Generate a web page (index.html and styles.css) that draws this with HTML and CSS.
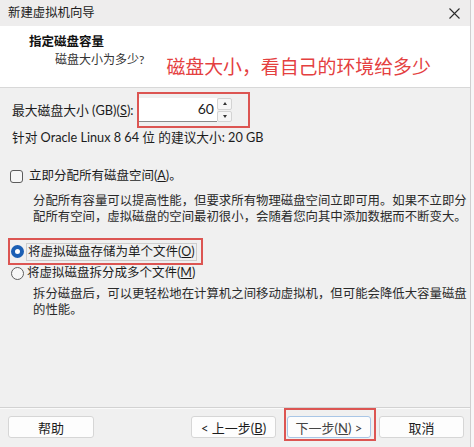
FILE: index.html
```html
<!DOCTYPE html>
<html lang="zh-CN">
  <head>
    <meta charset="UTF-8" />
    <meta name="viewport" content="width=device-width, initial-scale=1.0" />
    <title>新建虚拟机向导</title>
    <link rel="stylesheet" href="styles.css">
  </head>
  <body>
    <div class="window">
      <div class="titlebar">
        <span class="title">新建虚拟机向导</span>
        <svg class="close" width="11" height="11" viewBox="0 0 11 11">
          <path d="M0.5 0.5 L10.5 10.5 M10.5 0.5 L0.5 10.5" stroke="#2b2b2b" stroke-width="1.1" fill="none" />
        </svg>
      </div>

      <div class="header">
        <div class="heading">指定磁盘容量</div>
        <div class="sub-row">
          <span class="sub">磁盘大小为多少?</span>
          <span class="note">磁盘大小，看自己的环境给多少</span>
        </div>
      </div>

      <div class="content">
        <div class="size-row">
          <span class="size-label">最大磁盘大小 (GB)(<u>S</u>):</span>
          <div class="mark mark-spin">
            <div class="spin">
              <div class="spin-value">60</div>
              <div class="spin-arrows">
                <span class="spin-btn"><i class="tri tri-up"></i></span>
                <span class="spin-btn"><i class="tri tri-down"></i></span>
              </div>
            </div>
          </div>
        </div>
        <div class="hint">针对 Oracle Linux 8 64 位 的建议大小: 20 GB</div>

        <div class="check-row">
          <span class="checkbox"></span>
          <span>立即分配所有磁盘空间(<u>A</u>)。</span>
        </div>
        <p class="desc">分配所有容量可以提高性能，但要求所有物理磁盘空间立即可用。如果不立即分<br>配所有空间，虚拟磁盘的空间最初很小，会随着您向其中添加数据而不断变大。</p>

        <div class="mark mark-radio">
          <span class="radio radio-on"></span>
          <span class="focus-label">将虚拟磁盘存储为单个文件(<u>O</u>)</span>
        </div>
        <div class="radio-row">
          <span class="radio"></span>
          <span>将虚拟磁盘拆分成多个文件(<u>M</u>)</span>
        </div>
        <p class="desc desc-split">拆分磁盘后，可以更轻松地在计算机之间移动虚拟机，但可能会降低大容量磁盘<br>的性能。</p>
      </div>

      <div class="footer">
        <button class="btn">帮助</button>
        <button class="btn btn-back">&lt; 上一步(<u>B</u>)</button>
        <div class="mark mark-next">
          <button class="btn btn-default">下一步(<u>N</u>) &gt;</button>
        </div>
        <button class="btn btn-cancel">取消</button>
      </div>
    </div>
  </body>
</html>
```

FILE: styles.css
```css
* {
  box-sizing: border-box;
}

body {
  margin: 0;
  background: #f7f7f7;
  font-family: Lato, "Noto Sans CJK SC", sans-serif;
  font-size: 12.5px;
  line-height: 16px;
  color: #1c1c1c;
}

.window {
  width: 471px;
  height: 447px;
  display: flex;
  flex-direction: column;
  background: #f0f0f0;
  border-right: 1px solid #cfcfcf;
}

.titlebar {
  height: 26px;
  display: flex;
  align-items: center;
  justify-content: space-between;
  padding: 0 10px 0 8px;
  background: #eeeded;
}

.titlebar .title {
  font-size: 12.4px;
  color: #202020;
}

.header {
  height: 62px;
  padding-top: 8px;
  background: #fff;
  border-bottom: 1px solid #d8d8d8;
}

.heading {
  padding-left: 29px;
  font-size: 12.5px;
  font-weight: bold;
  color: #111;
}

.sub-row {
  display: flex;
  align-items: flex-start;
  margin-top: 2px;
  padding-left: 55px;
  white-space: nowrap;
}

.sub {
  font-size: 12px;
  color: #333;
}

.note {
  margin: 3px 0 0 22px;
  font-size: 18.9px;
  line-height: 24px;
  color: #e4403f;
}

.content {
  height: 319px;
  padding-left: 8px;
  white-space: nowrap;
}

.mark {
  border: 2px solid #dc5552;
}

.size-row {
  display: flex;
  align-items: center;
  margin: 4px 0 0 4px;
}

.size-label {
  width: 125px;
  flex-shrink: 0;
  font-size: 12.8px;
}

.mark-spin {
  width: 113px;
  height: 36px;
  padding: 4px 16px 0 0;
}

.spin {
  display: flex;
  height: 24px;
}

.spin-value {
  width: 78px;
  padding: 3px 3px 0 0;
  text-align: right;
  font-size: 14px;
  background: #fff;
  border-bottom: 1px solid #8a8a8a;
}

.spin-arrows {
  display: flex;
  flex-direction: column;
  gap: 1px;
  width: 15px;
}

.spin-btn {
  flex: 1;
  display: flex;
  align-items: center;
  justify-content: center;
  background: #f6f6f6;
  border: 1px solid #d3d3d3;
  border-radius: 2px;
}

.tri {
  width: 0;
  height: 0;
  border-left: 2.5px solid transparent;
  border-right: 2.5px solid transparent;
}

.tri-up {
  border-bottom: 3px solid #333;
}

.tri-down {
  border-top: 3px solid #333;
}

.hint {
  margin: 1px 0 0 4px;
  font-size: 12.7px;
}

.check-row,
.radio-row {
  display: flex;
  align-items: center;
  gap: 6px;
}

.check-row {
  margin: 23px 0 0 2px;
}

.checkbox {
  width: 13px;
  height: 13px;
  border: 1px solid #5c5c5c;
  border-radius: 3px;
  background: #f7f7f7;
}

.desc {
  margin: 9px 0 0 25px;
  font-size: 12.4px;
  color: #2a2a2a;
}

.desc-split {
  margin-top: 5px;
}

.mark-radio {
  display: flex;
  align-items: center;
  gap: 2px;
  width: 195px;
  height: 27px;
  margin-top: 13px;
  padding-left: 1px;
}

.radio {
  width: 13px;
  height: 13px;
  flex-shrink: 0;
  border: 1px solid #5f5f5f;
  border-radius: 50%;
  background: #f7f7f7;
}

.radio-on {
  border: 4px solid #1b5fb4;
  background: #fff;
}

.focus-label {
  padding: 0 1px;
  border: 1px solid #cdcdcd;
}

.radio-row {
  gap: 3px;
  margin-left: 3px;
}

.footer {
  flex: 1;
  display: flex;
  align-items: flex-start;
  padding: 8px 6px 0 8px;
  border-top: 1px solid #d2d2d2;
  box-shadow: inset 0 1px 0 #fafafa;
}

.btn {
  width: 86px;
  height: 22px;
  padding: 0;
  font-family: inherit;
  font-size: 13px;
  color: #1c1c1c;
  background: #fdfdfd;
  border: 1px solid #d6d6d6;
  border-radius: 3px;
}

.btn-back {
  width: 85px;
  margin-left: auto;
}

.mark-next {
  margin: -8px 0 0 8px;
  padding: 6px 3px 1px 1px;
}

.btn-default {
  width: 84px;
  border-color: #a9c6e6;
  color: #444;
}

.btn-cancel {
  width: 85px;
  margin-left: 3px;
}
```
